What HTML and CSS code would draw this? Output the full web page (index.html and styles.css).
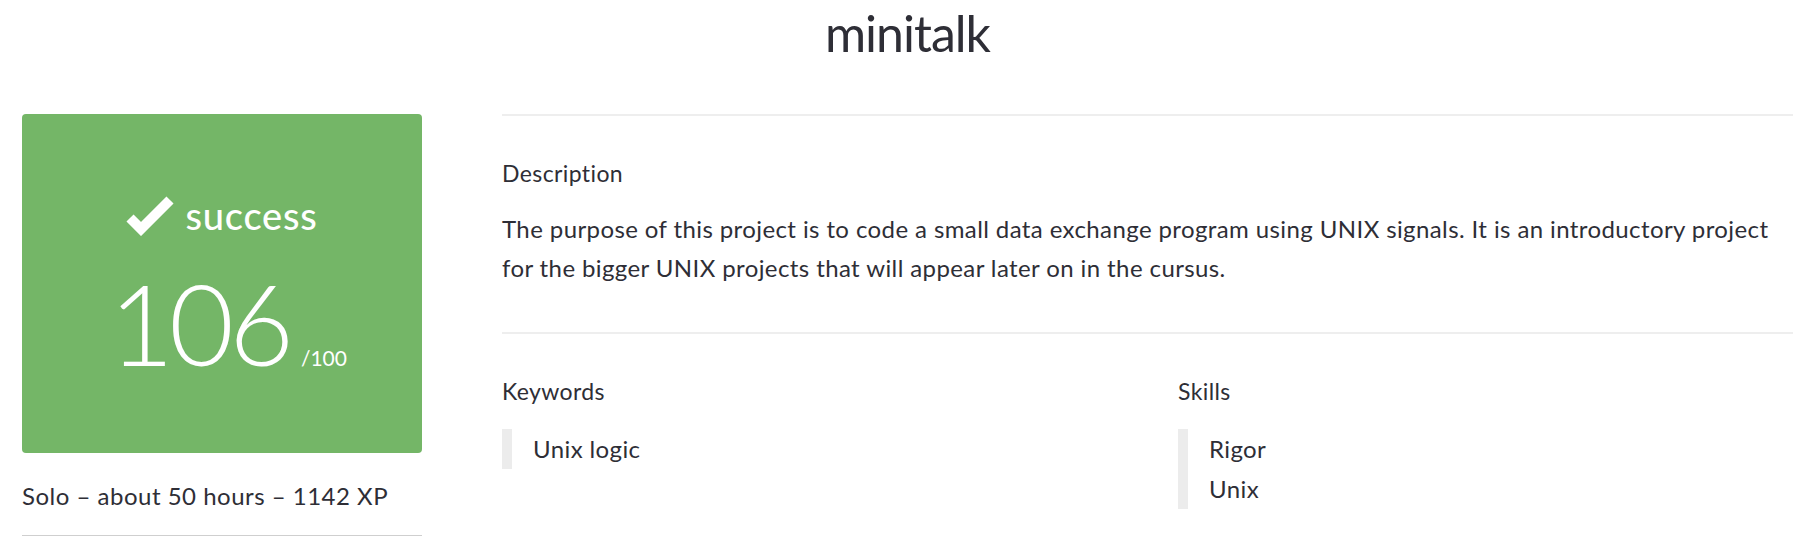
FILE: index.html
```html
<!DOCTYPE html>
<html lang="en">
<head>
<meta charset="utf-8">
<title>minitalk</title>
<link rel="stylesheet" href="styles.css">
</head>
<body>
<div class="page">
  <h1 class="title">minitalk</h1>
  <div class="content">
    <aside class="side">
      <div class="score-box">
        <div class="status">
          <svg class="check" viewBox="0 0 48 40" width="48" height="40" aria-hidden="true">
            <polyline points="4,22 15,33 44,4" fill="none" stroke="#fff" stroke-width="10" stroke-linecap="butt" stroke-linejoin="miter"/>
          </svg>
          <span class="status-text">success</span>
        </div>
        <div class="score">
          <span class="score-value">106</span><span class="score-max">/100</span>
        </div>
      </div>
      <div class="meta">Solo – about 50 hours – 1142 XP</div>
    </aside>
    <main class="details">
      <section class="section desc">
        <h2 class="heading">Description</h2>
        <p class="desc-text">The purpose of this project is to code a small data exchange program using UNIX signals. It is an introductory project for the bigger UNIX projects that will appear later on in the cursus.</p>
      </section>
      <section class="section tags">
        <div class="tag-col">
          <h2 class="heading">Keywords</h2>
          <ul class="tag-list">
            <li>Unix logic</li>
          </ul>
        </div>
        <div class="tag-col">
          <h2 class="heading">Skills</h2>
          <ul class="tag-list">
            <li>Rigor</li>
            <li>Unix</li>
          </ul>
        </div>
      </section>
    </main>
  </div>
</div>
</body>
</html>
```
FILE: styles.css
```css
* { box-sizing: border-box; }
html, body { margin: 0; padding: 0; background: #fff; }
body {
  font-family: "Lato", "Open Sans", sans-serif;
  color: #2e2e36;
}
.page {
  padding: 0 7px 0 22px;
}
.title {
  margin: 0 0 51px;
  padding-top: 3px;
  font-size: 50px;
  line-height: 60px;
  font-weight: 400;
  text-align: center;
  letter-spacing: -1px;
}
.content {
  display: grid;
  grid-template-columns: 400px 1fr;
  column-gap: 80px;
}
.score-box {
  height: 339px;
  background: #74b667;
  border-radius: 4px;
  color: #fff;
  display: flex;
  flex-direction: column;
  align-items: center;
  padding-top: 78px;
}
.status {
  display: flex;
  align-items: flex-end;
  gap: 11px;
  height: 46px;
}
.check { display: block; margin-bottom: 2px; }
.status-text {
  font-size: 38px;
  line-height: 46px;
  font-weight: 500;
  letter-spacing: 0.8px;
}
.score {
  margin-top: 29px;
  display: flex;
  align-items: baseline;
  padding-left: 12px;
}
.score-value {
  font-size: 112px;
  line-height: 112px;
  font-weight: 300;
  letter-spacing: -5px;
}
.score-max {
  font-size: 21px;
  font-weight: 400;
  margin-left: 12px;
}
.meta {
  margin-top: 27px;
  font-size: 24px;
  line-height: 32px;
  letter-spacing: 0.5px;
  padding-bottom: 23px;
  border-bottom: 2px solid #cfcfcf;
}
.details {
  border-top: 2px solid #eeeeee;
}
.section {
  padding-top: 41px;
}
.desc {
  padding-bottom: 45px;
  border-bottom: 2px solid #eeeeee;
}
.heading {
  margin: 0;
  font-size: 23px;
  line-height: 32px;
  font-weight: 400;
  letter-spacing: 0.4px;
}
.desc-text {
  margin: 20px 0 0;
  font-size: 24px;
  line-height: 39px;
  letter-spacing: 0.4px;
}
.tags {
  display: grid;
  grid-template-columns: 676px 1fr;
}
.tag-list {
  list-style: none;
  margin: 22px 0 0;
  padding: 0 0 0 21px;
  border-left: 10px solid #ececec;
  font-size: 24px;
  line-height: 40px;
  letter-spacing: 0.4px;
}
```
